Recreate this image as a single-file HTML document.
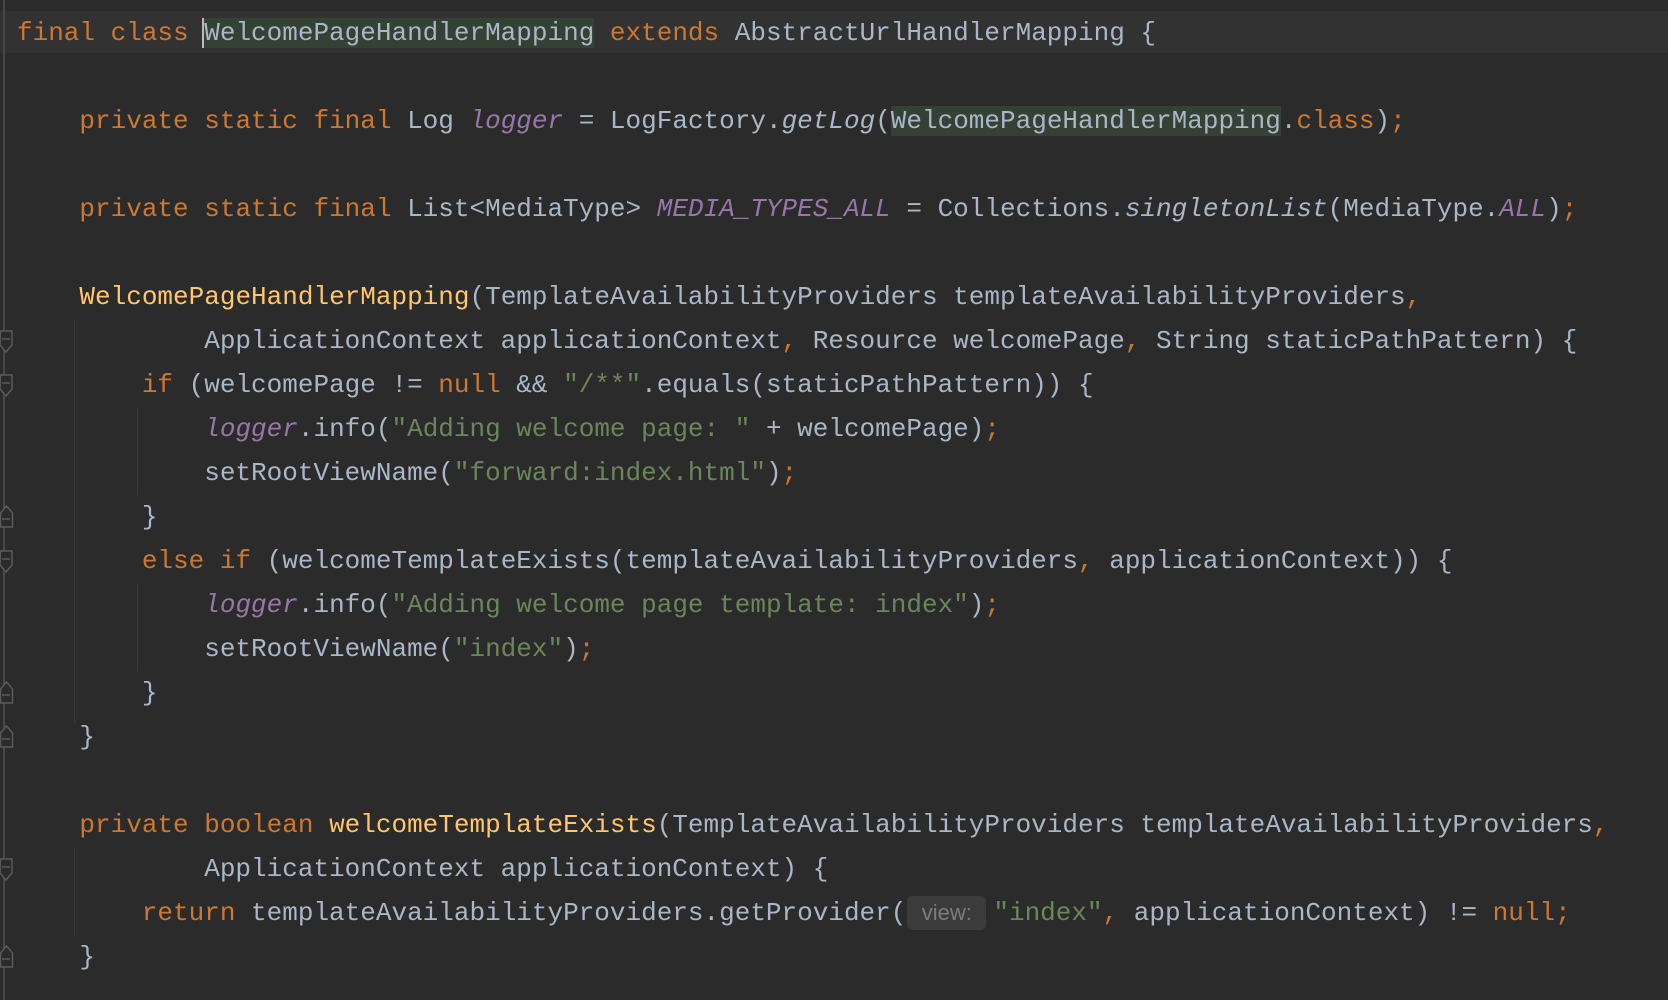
<!DOCTYPE html>
<html><head><meta charset="utf-8"><style>
html,body{margin:0;padding:0;background:#2b2b2b;width:1668px;height:1000px;overflow:hidden}
.l{position:absolute;left:17px;height:44px;line-height:44px;white-space:pre;font-family:"Liberation Mono",monospace;font-size:26px;color:#a9b7c6}
.k{color:#cc7832}.p{color:#9876aa;font-style:italic}.s{color:#6a8759}.m{color:#ffc66d}.i{font-style:italic}
.hl{background:#344134}
.hint{display:inline-block;width:79px;height:34px;line-height:34px;vertical-align:middle;margin:0 7px 0 1px;background:#3b3b3b;border-radius:5px;color:#7c7c7c;font-family:"Liberation Sans",sans-serif;font-size:22px;text-align:center}
.g{position:absolute;width:1px;background:#363b36}
</style></head><body>
<div style="position:absolute;left:0;top:11px;width:1668px;height:42px;background:#323232"></div>
<div style="position:absolute;left:3px;top:0;width:2px;height:1000px;background:#484848"></div>
<div class="g" style="left:74px;top:319px;height:404px"></div>
<div class="g" style="left:137px;top:407px;height:88px"></div>
<div class="g" style="left:137px;top:583px;height:88px"></div>
<div class="g" style="left:74px;top:847px;height:88px"></div>
<svg style="position:absolute;left:0;top:0" width="20" height="1000">
<g fill="#2b2b2b" stroke="#5a5a5a" stroke-width="1.5">
<path d="M0.5 331h11.5v14l-6 7l-6-7z"/><path d="M2 339h8"/>
<path d="M0.5 375h11.5v14l-6 7l-6-7z"/><path d="M2 383h8"/>
<path d="M0.5 551h11.5v14l-6 7l-6-7z"/><path d="M2 559h8"/>
<path d="M0.5 859h11.5v14l-6 7l-6-7z"/><path d="M2 867h8"/>
<path d="M0.5 527v-14l6-7l6 7v14z"/><path d="M2 519h8"/>
<path d="M0.5 703v-14l6-7l6 7v14z"/><path d="M2 695h8"/>
<path d="M0.5 747v-14l6-7l6 7v14z"/><path d="M2 739h8"/>
<path d="M0.5 967v-14l6-7l6 7v14z"/><path d="M2 959h8"/>
</g></svg>
<div class="l" style="top:11px"><span class="k">final class </span><span class="hl" style="border-left:2px solid #bbbbbb;margin-left:-2px">WelcomePageHandlerMapping</span><span class="k"> extends </span>AbstractUrlHandlerMapping {</div>
<div class="l" style="top:99px">    <span class="k">private static final </span>Log <span class="p">logger</span> = LogFactory.<span class="i">getLog</span>(<span class="hl">WelcomePageHandlerMapping</span>.<span class="k">class</span>)<span class="k">;</span></div>
<div class="l" style="top:187px">    <span class="k">private static final </span>List&lt;MediaType&gt; <span class="p">MEDIA_TYPES_ALL</span> = Collections.<span class="i">singletonList</span>(MediaType.<span class="p">ALL</span>)<span class="k">;</span></div>
<div class="l" style="top:275px">    <span class="m">WelcomePageHandlerMapping</span>(TemplateAvailabilityProviders templateAvailabilityProviders<span class="k">,</span></div>
<div class="l" style="top:319px">            ApplicationContext applicationContext<span class="k">, </span>Resource welcomePage<span class="k">, </span>String staticPathPattern) {</div>
<div class="l" style="top:363px">        <span class="k">if </span>(welcomePage != <span class="k">null </span>&amp;&amp; <span class="s">"/**"</span>.equals(staticPathPattern)) {</div>
<div class="l" style="top:407px">            <span class="p">logger</span>.info(<span class="s">"Adding welcome page: "</span> + welcomePage)<span class="k">;</span></div>
<div class="l" style="top:451px">            setRootViewName(<span class="s">"forward:index.html"</span>)<span class="k">;</span></div>
<div class="l" style="top:495px">        }</div>
<div class="l" style="top:539px">        <span class="k">else if </span>(welcomeTemplateExists(templateAvailabilityProviders<span class="k">, </span>applicationContext)) {</div>
<div class="l" style="top:583px">            <span class="p">logger</span>.info(<span class="s">"Adding welcome page template: index"</span>)<span class="k">;</span></div>
<div class="l" style="top:627px">            setRootViewName(<span class="s">"index"</span>)<span class="k">;</span></div>
<div class="l" style="top:671px">        }</div>
<div class="l" style="top:715px">    }</div>
<div class="l" style="top:803px">    <span class="k">private boolean </span><span class="m">welcomeTemplateExists</span>(TemplateAvailabilityProviders templateAvailabilityProviders<span class="k">,</span></div>
<div class="l" style="top:847px">            ApplicationContext applicationContext) {</div>
<div class="l" style="top:891px">        <span class="k">return </span>templateAvailabilityProviders.getProvider(<span class="hint">view:</span><span class="s">"index"</span><span class="k">, </span>applicationContext) != <span class="k">null;</span></div>
<div class="l" style="top:935px">    }</div>
</body></html>
